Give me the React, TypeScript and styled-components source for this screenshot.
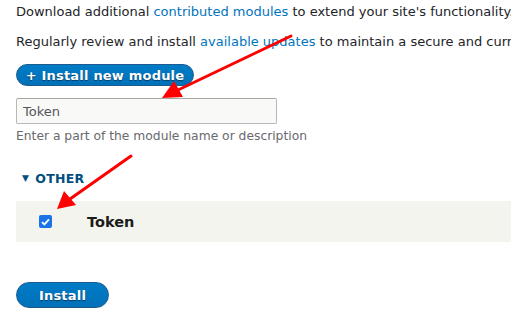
import React from 'react'
import styled, { createGlobalStyle } from 'styled-components'

const GlobalStyle = createGlobalStyle`
  html, body {
    margin: 0;
    padding: 0;
    background: #fff;
    overflow: hidden;
  }
  body {
    font-family: 'DejaVu Sans', 'Liberation Sans', sans-serif;
    font-size: 13px;
    color: #232429;
  }
`

const Page = styled.div`
  position: relative;
  width: 511px;
  height: 319px;
  padding: 3px 0 0 16px;
  box-sizing: border-box;
  overflow: hidden;
`

const Para = styled.p`
  margin: 0 0 12px;
  line-height: 18px;
  white-space: nowrap;
`

const TextLink = styled.a`
  color: #0074bd;
  text-decoration: none;
`

const PillButton = styled.button<{ $width: number; $height: number }>`
  display: inline-flex;
  align-items: center;
  justify-content: center;
  width: ${p => p.$width}px;
  height: ${p => p.$height}px;
  padding: 0;
  border: 1px solid #1e5c90;
  border-radius: 20px;
  background: linear-gradient(#007bc6, #0071b8);
  color: #fff;
  font-family: 'DejaVu Sans', sans-serif;
  font-weight: bold;
  font-size: 13px;
  letter-spacing: 0.2px;
  text-shadow: 0 1px 1px #0a3a60;
  box-sizing: border-box;
`

const ButtonRow = styled.div`
  margin-top: 13px;
`

const Field = styled.div`
  margin-top: 12px;
`

const Input = styled.input`
  display: block;
  width: 261px;
  height: 26px;
  box-sizing: border-box;
  border: 1px solid #b8b8b8;
  border-top-color: #a5a5a5;
  border-radius: 2px;
  background: #f9f9f8;
  padding: 0 6px;
  font-family: 'DejaVu Sans', sans-serif;
  font-size: 13px;
  color: #545559;
`

const Description = styled.div`
  margin-top: 4px;
  color: #68696e;
  font-size: 12.3px;
  line-height: 16px;
`

const GroupTitle = styled.div`
  display: flex;
  align-items: center;
  gap: 6px;
  margin: 27px 0 0 6px;
  color: #004f80;
  font-weight: bold;
  font-size: 12.5px;
  letter-spacing: 0.3px;
  line-height: 15px;
`

const Caret = styled.span`
  font-size: 9px;
`

const ModuleRow = styled.div`
  display: flex;
  align-items: center;
  height: 41px;
  margin-top: 15px;
  background: #f3f4ee;
`

const CheckCell = styled.div`
  width: 71px;
  display: flex;
  padding-left: 23px;
  box-sizing: border-box;
`

const Check = styled.span`
  display: inline-flex;
  align-items: center;
  justify-content: center;
  width: 13px;
  height: 13px;
  border-radius: 2px;
  background: #1a73e8;
`

const ModuleName = styled.span`
  font-weight: bold;
  font-size: 14.5px;
  color: #1b1b1b;
`

const Actions = styled.div`
  margin-top: 40px;
`

const Arrows = styled.svg`
  position: absolute;
  left: 0;
  top: 0;
  pointer-events: none;
`

export default function App() {
  return (
    <>
      <GlobalStyle />
      <Page>
        <Para>
          Download additional <TextLink href="#">contributed modules</TextLink> to extend your site's functionality.
        </Para>
        <Para>
          Regularly review and install <TextLink href="#">available updates</TextLink> to maintain a secure and current site.
        </Para>
        <ButtonRow>
          <PillButton $width={178} $height={22}>+ Install new module</PillButton>
        </ButtonRow>
        <Field>
          <Input defaultValue="Token" />
          <Description>Enter a part of the module name or description</Description>
        </Field>
        <GroupTitle>
          <Caret>▼</Caret>OTHER
        </GroupTitle>
        <ModuleRow>
          <CheckCell>
            <Check>
              <svg width="9" height="8" viewBox="0 0 9 8">
                <path d="M1 4.2 L3.4 6.4 L8 1.4" fill="none" stroke="#fff" strokeWidth="1.8" />
              </svg>
            </Check>
          </CheckCell>
          <ModuleName>Token</ModuleName>
        </ModuleRow>
        <Actions>
          <PillButton $width={93} $height={26}>Install</PillButton>
        </Actions>
        <Arrows width="511" height="319" viewBox="0 0 511 319">
          <line x1="291" y1="36" x2="178" y2="90" stroke="#f00" strokeWidth="3" strokeLinecap="round" />
          <polygon points="162,98 174,81 183,97" fill="#f00" />
          <line x1="131" y1="156" x2="70" y2="199" stroke="#f00" strokeWidth="3" strokeLinecap="round" />
          <polygon points="57,209 64,191 76,205" fill="#f00" />
        </Arrows>
      </Page>
    </>
  )
}
